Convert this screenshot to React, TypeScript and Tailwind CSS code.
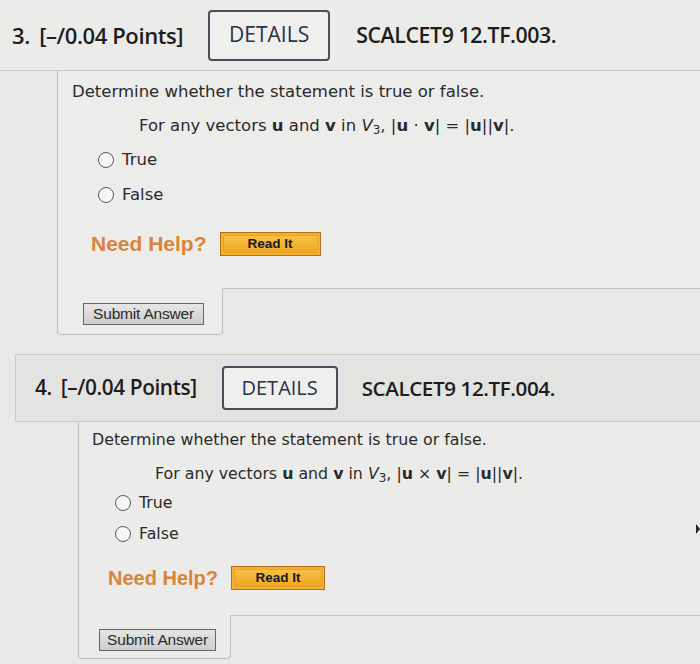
import React from "react";

function Radio({ label, size }: { label: string; size: string }) {
  return (
    <div className="flex items-center gap-[8px] h-[20px]">
      <span className="w-[16px] h-[16px] rounded-full border-[1.5px] border-[#5a5a5a] bg-[#f6f6f6]" />
      <span className={`${size} leading-[20px] text-[#2a2a2a] font-['DejaVu_Sans',sans-serif]`}>{label}</span>
    </div>
  );
}

function Header({ num, code, big }: { num: string; code: string; big: boolean }) {
  return (
    <div className="flex items-center font-['Open_Sans',sans-serif] text-[#1d1d1d]">
      <span className={`${big ? "text-[22px]" : "text-[20.8px]"} font-semibold tracking-[-0.4px]`}>
        {num}. <span className="ml-[4px]">[–/0.04 Points]</span>
      </span>
      <span
        className={`${big ? "ml-[25px] w-[122px] h-[51px] text-[21px]" : "ml-[25px] w-[116px] h-[44px] text-[20px]"} flex items-center justify-center border-2 border-[#46505e] rounded-[4px] text-[#24344a] bg-[#efefed]`}
      >
        DETAILS
      </span>
      <span className={`${big ? "ml-[26px] text-[21.3px]" : "ml-[24px] text-[20.6px]"} font-semibold tracking-[-0.4px]`}>{code}</span>
    </div>
  );
}

function Body({ op, indent, size }: { op: string; indent: string; size: string }) {
  return (
    <div className="font-['DejaVu_Sans',sans-serif] text-[#2a2a2a]">
      <div className={`${size} leading-[20px]`}>Determine whether the statement is true or false.</div>
      <div className={`${size} leading-[20px] mt-[14px] ${indent}`}>
        For any vectors <b>u</b> and <b>v</b> in <i>V</i>
        <sub className="text-[12px]">3</sub>, |<b>u</b> {op} <b>v</b>| = |<b>u</b>||<b>v</b>|.
      </div>
    </div>
  );
}

function NeedHelp({ w, size }: { w: string; size: string }) {
  return (
    <div className="flex items-center gap-[13px] font-['Liberation_Sans',sans-serif]">
      <span className={`${size} font-bold text-[#d8843a]`}>Need Help?</span>
      <span className={`${w} h-[24px] border border-[#b86e1c] bg-[#f3b12d] p-[2px]`}>
        <span className="w-full h-full flex items-center justify-center border border-[#e9a12a] bg-[linear-gradient(#f8c04a,#eea624)] text-[13.5px] font-bold text-[#1a1a1a]">
          Read It
        </span>
      </span>
    </div>
  );
}

function Submit({ w }: { w: string }) {
  return (
    <span className={`inline-flex items-center justify-center ${w} h-[22px] border border-[#666] bg-[linear-gradient(#e6e6e6,#cdcdcd)] text-[15.5px] text-[#2a2a2a] font-['Liberation_Sans',sans-serif] tracking-[-0.2px]`}>
      Submit Answer
    </span>
  );
}

export default function App() {
  return (
    <div className="w-[700px] h-[664px] overflow-hidden bg-[#e8e8e6]">
      {/* Question 3 */}
      <div className="h-[71px] pl-[12px] flex items-center border-b border-[#c9c9c7] bg-[#ebebe9]">
        <Header num="3" code="SCALCET9 12.TF.003." big={true} />
      </div>
      <div className="ml-[57px] border-l border-[#bdbdbb] bg-[#ececea] h-[217px] pl-[14px] pt-[11px]">
        <Body op="·" indent="pl-[67px]" size="text-[16.5px]" />
        <div className="mt-[14px] pl-[26px] flex flex-col gap-[15px]">
          <Radio label="True" size="text-[16.5px]" />
          <Radio label="False" size="text-[16.5px]" />
        </div>
        <div className="mt-[23px] pl-[19px]">
          <NeedHelp w="w-[101px]" size="text-[21px]" />
        </div>
      </div>
      <div className="flex">
        <div className="ml-[57px] w-[166px] h-[47px] border-l border-r border-b border-[#bdbdbb] rounded-b-[4px] bg-[#ececea] pl-[25px] pt-[13px]">
          <Submit w="w-[121px]" />
        </div>
        <div className="flex-1 border-t border-[#c4c4c2]" />
      </div>

      {/* Question 4 */}
      <div className="mt-[19px] ml-[15px] h-[68px] pl-[19px] flex items-center border border-r-0 border-[#c9c9c7] bg-[#e3e3e1]">
        <Header num="4" code="SCALCET9 12.TF.004." big={false} />
      </div>
      <div className="ml-[78px] border-l border-[#bdbdbb] bg-[#ebebe9] h-[193px] pl-[13px] pt-[8px] relative">
        <Body op="×" indent="pl-[63px]" size="text-[15.8px]" />
        <div className="mt-[9px] pl-[23px] flex flex-col gap-[11px]">
          <Radio label="True" size="text-[15.8px]" />
          <Radio label="False" size="text-[15.8px]" />
        </div>
        <div className="mt-[19px] pl-[16px]">
          <NeedHelp w="w-[94px]" size="text-[20px]" />
        </div>
        <span className="absolute right-[0px] top-[102px] w-0 h-0 border-y-[5px] border-y-transparent border-l-[4px] border-l-[#222]" />
      </div>
      <div className="flex">
        <div className="ml-[78px] w-[153px] h-[44px] border-l border-r border-b border-[#bdbdbb] rounded-b-[4px] bg-[#ebebe9] pl-[20px] pt-[12px]">
          <Submit w="w-[117px]" />
        </div>
        <div className="flex-1 border-t border-[#c4c4c2]" />
      </div>
    </div>
  );
}
